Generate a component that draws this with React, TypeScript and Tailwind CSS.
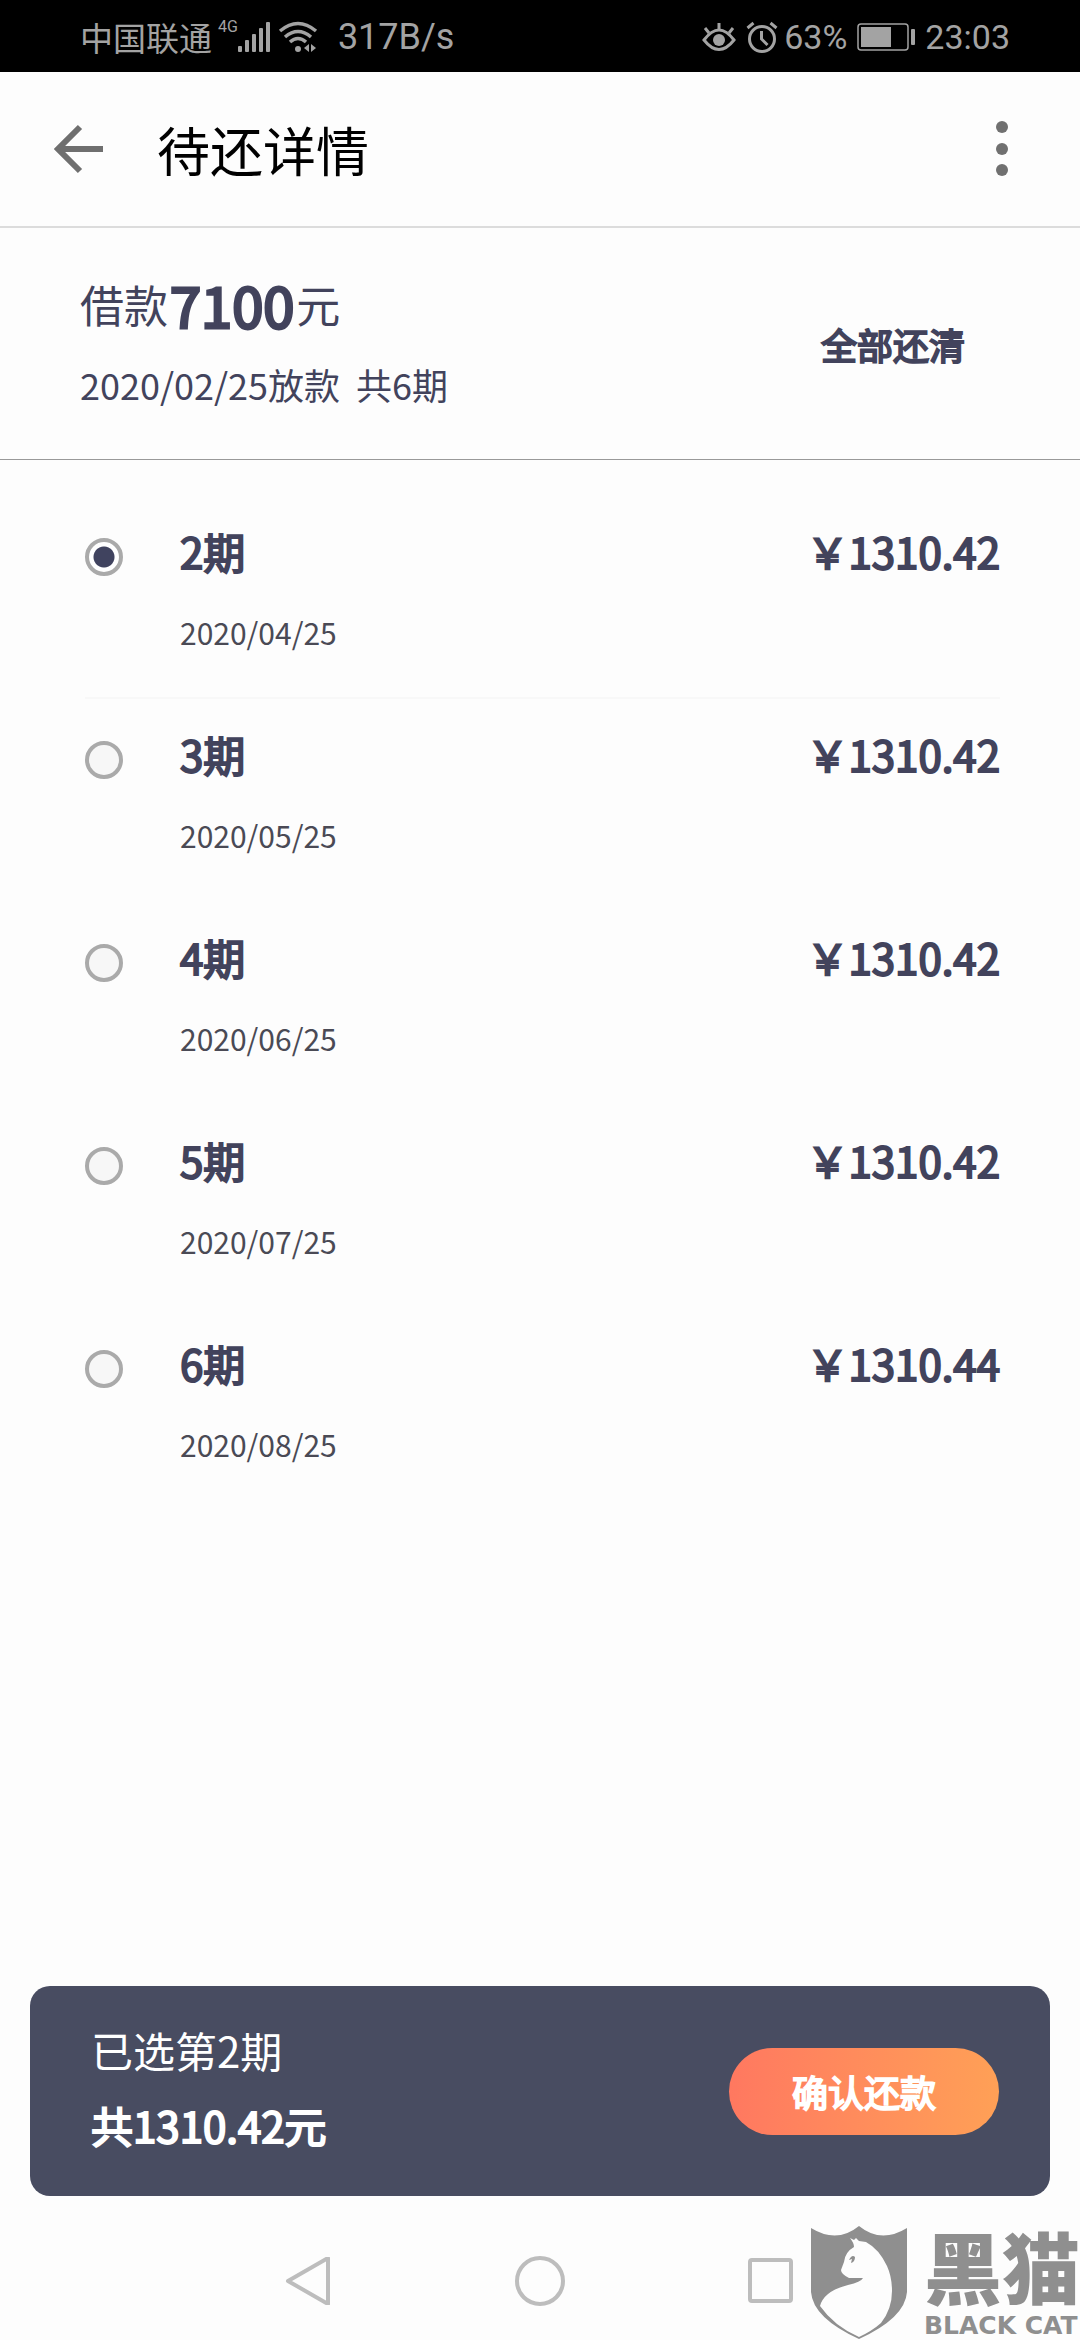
import { useState } from 'react';

interface Installment {
  period: number;
  date: string;
  amount: string;
}

const installments: Installment[] = [
  { period: 2, date: '2020/04/25', amount: '1310.42' },
  { period: 3, date: '2020/05/25', amount: '1310.42' },
  { period: 4, date: '2020/06/25', amount: '1310.42' },
  { period: 5, date: '2020/07/25', amount: '1310.42' },
  { period: 6, date: '2020/08/25', amount: '1310.44' },
];

const StatusBar = () => (
  <div className="flex h-[72px] items-center justify-between bg-black pt-0.5 pr-[70px] pl-20 text-[#a3a3a3]">
    <div className="flex items-center">
      <span className="text-[33px] leading-none">中国联通</span>
      <span className="ml-1.5 self-start font-[Roboto,sans-serif] text-base leading-none">
        4G
      </span>
      <svg className="h-8 w-8" viewBox="0 0 32 32" fill="currentColor">
        <rect x="0" y="25" width="4" height="6" rx="1" />
        <rect x="7" y="19" width="4" height="12" rx="1" />
        <rect x="14" y="13" width="4" height="18" rx="1" />
        <rect x="21" y="7" width="4" height="24" rx="1" />
        <rect x="28" y="1" width="4" height="30" rx="1" />
      </svg>
      <svg
        className="ml-2 h-8 w-10"
        viewBox="0 0 40 32"
        fill="none"
        stroke="currentColor"
        strokeWidth="3.500"
      >
        <path d="M2 10 Q20 -5 38 10" />
        <path d="M7 16 Q20 5 33 16" />
        <path d="M12 21 Q20 14 28 21" />
        <circle cx="20" cy="28" r="3" fill="currentColor" stroke="none" />
        <path d="M31 23v8l-5-4zM33 23v8l5-4z" fill="currentColor" stroke="none" />
      </svg>
      <span className="ml-5 font-[Roboto,sans-serif] text-4xl leading-none">317B/s</span>
    </div>
    <div className="flex items-center font-[Roboto,sans-serif] text-[34px] leading-none">
      <svg
        className="h-8 w-[34px]"
        viewBox="0 0 34 32"
        fill="none"
        stroke="currentColor"
        strokeWidth="3"
      >
        <path d="M2 19 Q17 -1 32 19 Q17 38 2 19Z" />
        <circle cx="17" cy="19" r="6" fill="currentColor" stroke="none" />
        <path d="M17 2v6M3 7l4 5M31 7l-4 5" />
      </svg>
      <svg
        className="ml-2.5 h-8 w-8"
        viewBox="0 0 32 32"
        fill="none"
        stroke="currentColor"
        strokeWidth="3"
      >
        <circle cx="16" cy="18" r="12.5" />
        <path d="M15.500 10v8l6 6M1.500 7l6-5M30.500 7l-6-5" />
      </svg>
      <span className="ml-1.5">63%</span>
      <svg className="ml-2.5 h-7 w-[58px]" viewBox="0 0 58 28" fill="none">
        <rect x="1" y="1" width="50" height="26" rx="3" stroke="currentColor" strokeWidth="1.500" />
        <rect x="4" y="4" width="30" height="20" fill="currentColor" />
        <rect x="54" y="6" width="4" height="16" rx="1" fill="currentColor" />
      </svg>
      <span className="ml-2.5">23:03</span>
    </div>
  </div>
);

const Header = () => (
  <header className="flex h-[156px] items-center border-b-2 border-[#dcdcdc] pr-14 pl-[53px]">
    <button type="button" aria-label="返回">
      <svg
        className="h-[50px] w-[50px]"
        viewBox="0 0 50 50"
        fill="none"
        stroke="#6f6f6f"
        strokeWidth="6"
      >
        <path d="M27 3 L5 25 L27 47 M5 25 H50" />
      </svg>
    </button>
    <h1 className="ml-[54px] text-[53px] leading-none text-black">待还详情</h1>
    <button type="button" aria-label="更多" className="ml-auto">
      <svg className="h-14 w-11" viewBox="0 0 44 56" fill="#707070">
        <circle cx="22" cy="6" r="6" />
        <circle cx="22" cy="28" r="6" />
        <circle cx="22" cy="49" r="6" />
      </svg>
    </button>
  </header>
);

const LoanSummary = () => (
  <section className="flex h-[232px] items-center justify-between border-b border-[#999999] pr-[115px] pl-20">
    <div>
      <p className="flex items-center text-[44px] leading-20">
        <span>借款</span>
        <span className="mx-0.5 text-[56px] [-webkit-text-stroke:3px]">7100</span>
        <span>元</span>
      </p>
      <p className="text-4xl leading-20">
        <span>2020/02/25放款</span>
        <span className="ml-4">共6期</span>
      </p>
    </div>
    <button type="button" className="text-4xl [-webkit-text-stroke:2px]">
      全部还清
    </button>
  </section>
);

interface InstallmentRowProps {
  item: Installment;
  checked: boolean;
  onSelect: (period: number) => void;
}

const InstallmentRow = ({ item, checked, onSelect }: InstallmentRowProps) => (
  <li className="h-[203px] first:border-b-2 first:border-[#f8f8f8]">
    <label className="flex items-start">
      <input
        type="radio"
        name="installment"
        checked={checked}
        onChange={() => onSelect(item.period)}
        className="mt-[42px] h-[38px] w-[38px] shrink-0 appearance-none rounded-full border-4 border-[#aaaaaa] bg-[#f7f7f7] bg-clip-padding checked:bg-[radial-gradient(circle,#40435f_10px,#ffffff_11px)]"
      />
      <span className="ml-[57px] flex flex-col">
        <span className="mt-[15px] text-[42px] leading-20 [-webkit-text-stroke:2px]">
          {item.period}期
        </span>
        <span className="text-3xl leading-[82px] text-[#4a4a55]">{item.date}</span>
      </span>
      <span className="mt-[15px] ml-auto text-[42px] leading-20 [-webkit-text-stroke:2px]">
        ￥{item.amount}
      </span>
    </label>
  </li>
);

const Watermark = () => (
  <div className="absolute right-0 bottom-0 flex items-end text-[#8f8f8f]">
    <svg className="h-[115px] w-[98px]" viewBox="0 0 98 115">
      <path
        d="M1 3 Q27 19 49 1 Q71 19 97 3 V67 Q95 93 49 114 Q3 93 1 67Z"
        fill="currentColor"
      />
      <path
        d="M40 13 L44 15 L46 13 L49 16 L56 17 Q69 24 77 41 Q82 52 82 66 Q82 84 71 98 Q62 106 49 112 Q24 101 10 81 Q14 66 38 60 Q51 57 53 53 H39 Q31 49 31 45 L34 37 Q35 27 44 22 Q44 18 40 13Z"
        fill="#fdfdfd"
      />
      <path d="M39 35 Q42 29 45 32 Q45 37 41 38 L42 34Z" fill="currentColor" />
    </svg>
    <div className="ml-4 flex w-[156px] flex-col">
      <span className="mb-2 text-[78px] leading-[78px] font-black">黑猫</span>
      <span className="font-['DejaVu_Sans',sans-serif] text-[25px] leading-7 font-bold whitespace-nowrap">
        BLACK CAT
      </span>
    </div>
  </div>
);

const SystemNav = () => (
  <nav className="relative mt-[26px] flex h-[118px] items-center justify-center gap-[182px]">
    <button type="button" aria-label="后退">
      <svg className="h-12 w-12" viewBox="0 0 48 48" fill="none" stroke="#bdbdbd" strokeWidth="4">
        <path d="M3 24 L43 1 V47Z" strokeLinejoin="round" />
      </svg>
    </button>
    <button type="button" aria-label="主页">
      <svg className="h-[50px] w-[50px]" viewBox="0 0 50 50" fill="none" stroke="#bdbdbd" strokeWidth="4">
        <circle cx="25" cy="25" r="23" />
      </svg>
    </button>
    <button type="button" aria-label="最近任务">
      <svg className="h-12 w-12" viewBox="0 0 48 48" fill="none" stroke="#bdbdbd" strokeWidth="4">
        <rect x="3" y="3" width="41" height="41" rx="2" />
      </svg>
    </button>
    <Watermark />
  </nav>
);

const App = () => {
  const [selected, setSelected] = useState(2);
  const current = installments.find((item) => item.period === selected);

  return (
    <div className="flex min-h-screen flex-col bg-[#fdfdfd] font-['Noto_Sans_CJK_SC',sans-serif] text-[#42435c]">
      <StatusBar />
      <Header />
      <LoanSummary />
      <ul className="mt-9 pr-20 pl-[85px]">
        {installments.map((item) => (
          <InstallmentRow
            key={item.period}
            item={item}
            checked={item.period === selected}
            onSelect={setSelected}
          />
        ))}
      </ul>
      <footer className="mt-auto">
        <div className="mx-[30px] flex h-[210px] items-center justify-between rounded-[20px] bg-[#484c61] pr-[51px] pl-[61px] text-white">
          <div className="pb-2 text-[42px] leading-[75px]">
            <p>已选第{selected}期</p>
            <p className="[-webkit-text-stroke:2px]">共{current?.amount}元</p>
          </div>
          <button
            type="button"
            className="h-[87px] w-[270px] rounded-full bg-linear-to-r from-[#ff7860] to-[#ffa056] text-4xl [-webkit-text-stroke:2px]"
          >
            确认还款
          </button>
        </div>
        <SystemNav />
      </footer>
    </div>
  );
};

export default App;
